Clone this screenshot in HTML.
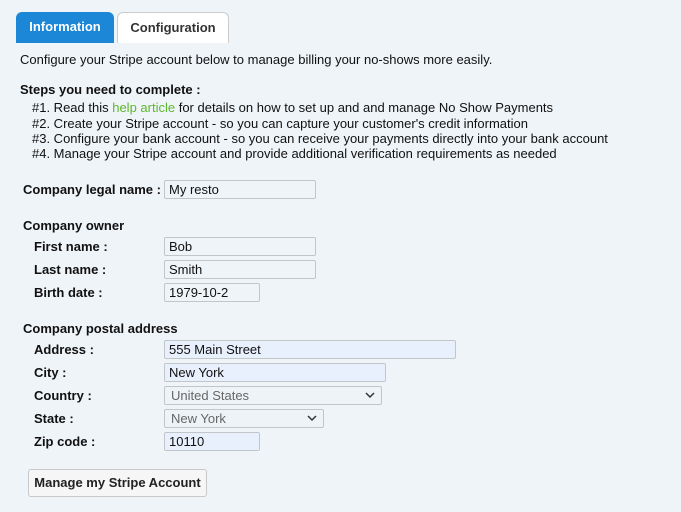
<!DOCTYPE html>
<html><head><meta charset="utf-8"><style>
body{margin:0;width:681px;height:512px;background:#eff4f8;font-family:"Liberation Sans",Arial,sans-serif;font-size:13px;color:#111;position:relative;overflow:hidden}
.a{position:absolute;white-space:nowrap}
.b{font-weight:bold}
.tab{position:absolute;top:12px;height:31px;box-sizing:border-box;border-radius:6px 6px 0 0;font-weight:bold;font-size:13px;line-height:30px;text-align:center}
.in{position:absolute;box-sizing:border-box;height:19px;border:1px solid #c3c6c9;border-radius:2px;padding-left:4px;line-height:17px;font-size:13px;color:#111}
.blue{background:#e8f0fe}
.sel{color:#666;background:#eef3f8;padding-left:6px}
.sel svg{position:absolute;right:6px;top:5px}
</style></head><body>
<div class="tab" style="left:16px;width:98px;background:#1b87d6;color:#fff">Information</div>
<div class="tab" style="left:117px;width:112px;background:#fff;border:1px solid #ccc;border-bottom:none;color:#333">Configuration</div>
<div class="a" style="left:20px;top:52px">Configure your Stripe account below to manage billing your no-shows more easily.</div>
<div class="a b" style="left:20px;top:82px">Steps you need to complete :</div>
<div class="a" style="left:32px;top:100px">#1. Read this <span style="color:#5cb82c">help article</span> for details on how to set up and and manage No Show Payments</div>
<div class="a" style="left:32px;top:116px">#2. Create your Stripe account - so you can capture your customer's credit information</div>
<div class="a" style="left:32px;top:131px">#3. Configure your bank account - so you can receive your payments directly into your bank account</div>
<div class="a" style="left:32px;top:146px">#4. Manage your Stripe account and provide additional verification requirements as needed</div>

<div class="a b" style="left:23px;top:182px">Company legal name :</div>
<div class="in" style="left:164px;top:180px;width:152px">My resto</div>
<div class="a b" style="left:23px;top:218px">Company owner</div>
<div class="a b" style="left:34px;top:239px">First name :</div>
<div class="in" style="left:164px;top:237px;width:152px">Bob</div>
<div class="a b" style="left:34px;top:262px">Last name :</div>
<div class="in" style="left:164px;top:260px;width:152px">Smith</div>
<div class="a b" style="left:34px;top:285px">Birth date :</div>
<div class="in" style="left:164px;top:283px;width:96px">1979-10-2</div>

<div class="a b" style="left:23px;top:321px">Company postal address</div>
<div class="a b" style="left:34px;top:342px">Address :</div>
<div class="in blue" style="left:164px;top:340px;width:292px">555 Main Street</div>
<div class="a b" style="left:34px;top:365px">City :</div>
<div class="in blue" style="left:164px;top:363px;width:222px">New York</div>
<div class="a b" style="left:34px;top:388px">Country :</div>
<div class="in sel" style="left:164px;top:386px;width:218px">United States<svg width="10" height="7" viewBox="0 0 10 7"><path d="M1 1l4 4 4-4" fill="none" stroke="#333" stroke-width="1.5"/></svg></div>
<div class="a b" style="left:34px;top:411px">State :</div>
<div class="in sel" style="left:164px;top:409px;width:160px">New York<svg width="10" height="7" viewBox="0 0 10 7"><path d="M1 1l4 4 4-4" fill="none" stroke="#333" stroke-width="1.5"/></svg></div>
<div class="a b" style="left:34px;top:434px">Zip code :</div>
<div class="in blue" style="left:164px;top:432px;width:96px">10110</div>

<div class="a b" style="left:28px;top:469px;width:179px;height:28px;box-sizing:border-box;border:1px solid #c8c8c8;border-radius:3px;background:#f6f6f6;line-height:26px;text-align:center;color:#222">Manage my Stripe Account</div>
</body></html>
